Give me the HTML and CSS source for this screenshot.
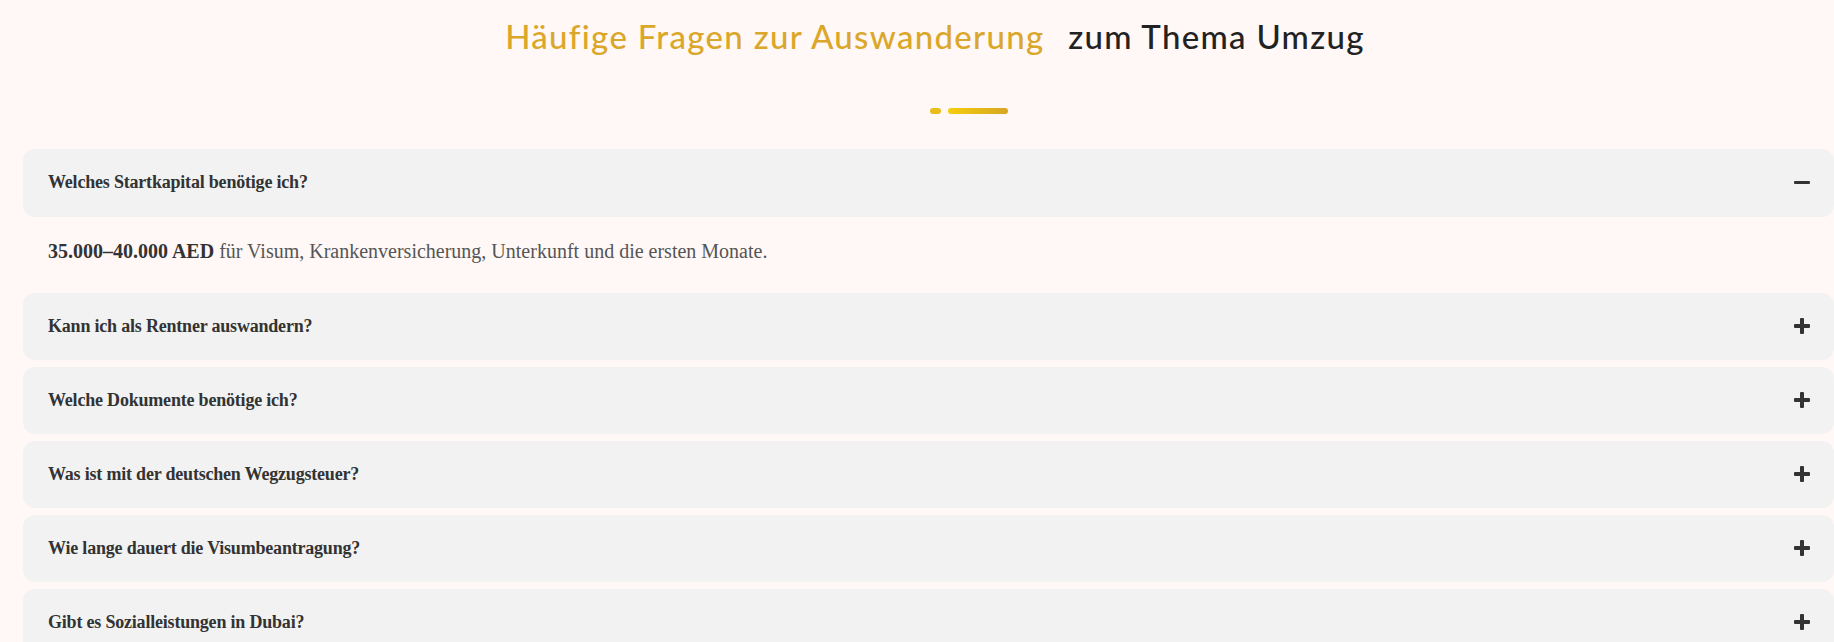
FILE: index.html
```html
<!DOCTYPE html>
<html lang="de">
<head>
    <meta charset="UTF-8">
    <meta name="viewport" content="width=device-width, initial-scale=1.0">
    <title>FAQ | Auswanderung nach Dubai</title>
    <link rel="stylesheet" href="styles.css">
</head>
<body>
    <section class="faq-section">
        <h2 class="faq-title">
            <span class="faq-title-accent">Häufige Fragen zur Auswanderung</span>
            <span class="faq-title-rest">zum Thema Umzug</span>
        </h2>

        <div class="title-divider">
            <span class="divider-dot"></span>
            <span class="divider-bar"></span>
        </div>

        <div class="faq-list">
            <div class="faq-item open">
                <button class="faq-question">
                    <span>Welches Startkapital benötige ich?</span>
                    <span class="faq-icon"></span>
                </button>
                <div class="faq-answer">
                    <p><strong>35.000–40.000 AED</strong> für Visum, Krankenversicherung, Unterkunft und die ersten Monate.</p>
                </div>
            </div>

            <div class="faq-item">
                <button class="faq-question">
                    <span>Kann ich als Rentner auswandern?</span>
                    <span class="faq-icon"></span>
                </button>
                <div class="faq-answer">
                    <p>Ja, ab 55 Jahren gibt es ein spezielles Ruhestandsvisum.</p>
                </div>
            </div>

            <div class="faq-item">
                <button class="faq-question">
                    <span>Welche Dokumente benötige ich?</span>
                    <span class="faq-icon"></span>
                </button>
                <div class="faq-answer">
                    <p>Reisepass, Passfotos, Nachweise über Einkommen und Krankenversicherung.</p>
                </div>
            </div>

            <div class="faq-item">
                <button class="faq-question">
                    <span>Was ist mit der deutschen Wegzugsteuer?</span>
                    <span class="faq-icon"></span>
                </button>
                <div class="faq-answer">
                    <p>Sie betrifft vor allem Beteiligungen an Kapitalgesellschaften.</p>
                </div>
            </div>

            <div class="faq-item">
                <button class="faq-question">
                    <span>Wie lange dauert die Visumbeantragung?</span>
                    <span class="faq-icon"></span>
                </button>
                <div class="faq-answer">
                    <p>In der Regel zwei bis vier Wochen.</p>
                </div>
            </div>

            <div class="faq-item">
                <button class="faq-question">
                    <span>Gibt es Sozialleistungen in Dubai?</span>
                    <span class="faq-icon"></span>
                </button>
                <div class="faq-answer">
                    <p>Nein, für Ausländer gibt es keine staatlichen Sozialleistungen.</p>
                </div>
            </div>
        </div>
    </section>

    <script>
        // Accordion: one open item at a time
        document.querySelectorAll('.faq-question').forEach((btn) => {
            btn.addEventListener('click', () => {
                const item = btn.parentElement;
                const wasOpen = item.classList.contains('open');
                document.querySelectorAll('.faq-item').forEach((i) => i.classList.remove('open'));
                if (!wasOpen) {
                    item.classList.add('open');
                }
            });
        });
    </script>
</body>
</html>
```

FILE: styles.css
```css
* {
    margin: 0;
    padding: 0;
    box-sizing: border-box;
}

body {
    font-family: 'Liberation Serif', 'Times New Roman', serif;
    background: #fff8f7;
    color: #333;
    overflow: hidden;
}

.faq-section {
    padding: 17px 0 0 23px;
}

.faq-title {
    text-align: center;
    padding-left: 13px;
    font-family: 'Lato', 'Open Sans', sans-serif;
    font-weight: 500;
    font-size: 33px;
    line-height: 1.2;
    letter-spacing: 1.3px;
}

.faq-title-accent {
    color: #dba72a;
    margin-right: 14px;
}

.faq-title-rest {
    color: #222;
}

.title-divider {
    display: flex;
    justify-content: center;
    align-items: center;
    gap: 7px;
    margin: 51px 0 35px;
    padding-left: 81px;
}

.divider-dot {
    width: 11px;
    height: 6px;
    border-radius: 3px;
    background: #e9bd1c;
}

.divider-bar {
    width: 60px;
    height: 6px;
    border-radius: 3px;
    background: linear-gradient(90deg, #f6cd0c, #d6a624);
}

.faq-item {
    margin-bottom: 7px;
}

.faq-question {
    width: 100%;
    height: 67px;
    display: flex;
    align-items: center;
    justify-content: space-between;
    padding: 0 24px 0 25px;
    background: #f2f2f2;
    border: none;
    border-radius: 12px;
    font-family: inherit;
    font-size: 18px;
    font-weight: 700;
    letter-spacing: -0.2px;
    color: #333;
    text-align: left;
    cursor: pointer;
}

.faq-item.open .faq-question {
    height: 68px;
}

.faq-icon {
    position: relative;
    width: 16px;
    height: 16px;
}

/* plus sign, the vertical bar is hidden when the item is open */
.faq-icon::before,
.faq-icon::after {
    content: '';
    position: absolute;
    background: #333;
    border-radius: 1px;
}

.faq-icon::before {
    left: 0;
    top: 6.4px;
    width: 16px;
    height: 3.4px;
}

.faq-icon::after {
    left: 6.4px;
    top: 0;
    width: 3.4px;
    height: 16px;
}

.faq-item.open .faq-icon::after {
    display: none;
}

.faq-answer {
    display: none;
    padding: 20px 25px;
    font-size: 20px;
    line-height: 29px;
    color: #555;
}

.faq-answer strong {
    color: #333;
}

.faq-item.open .faq-answer {
    display: block;
}
```
